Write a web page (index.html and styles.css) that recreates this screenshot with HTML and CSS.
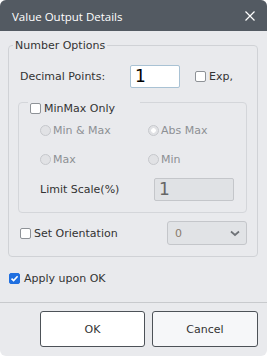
FILE: index.html
```html
<!DOCTYPE html>
<html>
<head>
<meta charset="utf-8">
<link rel="stylesheet" href="styles.css">
</head>
<body>
<div class="dialog">
  <div class="titlebar">
    <span class="title">Value Output Details</span>
    <svg class="close" width="10" height="10" viewBox="0 0 10 10"><path d="M0.5 0.5L9.5 9.5M9.5 0.5L0.5 9.5" stroke="#fff" stroke-width="1.2" fill="none"/></svg>
  </div>
  <div class="content">
    <fieldset class="outer">
      <legend>Number Options</legend>
      <div class="outer-body">
        <div class="decimal">
          <span class="lbl-dec">Decimal Points:</span>
          <span class="num">1</span>
          <span class="cb exp-cb"></span><span class="cb-text">Exp,</span>
        </div>
        <div class="group">
          <div class="group-head"><span class="cb"></span><span class="head-text">MinMax Only</span></div>
          <div class="radios">
            <div class="radio-item"><span class="rb"></span>Min &amp; Max</div>
            <div class="radio-item"><span class="rb on"></span>Abs Max</div>
            <div class="radio-item"><span class="rb"></span>Max</div>
            <div class="radio-item"><span class="rb"></span>Min</div>
          </div>
          <div class="limit"><span class="limit-lbl">Limit Scale(%)</span><span class="num dis">1</span></div>
        </div>
        <div class="orient">
          <span class="cb"></span><span class="cb-text">Set Orientation</span>
          <div class="select"><span class="sel-val">0</span><svg width="10" height="7" viewBox="0 0 10 7"><path d="M1 1.5L5 5L9 1.5" stroke="#6f7378" stroke-width="1.7" fill="none"/></svg></div>
        </div>
      </div>
    </fieldset>
    <div class="apply">
      <span class="cb checked"><svg width="9" height="9" viewBox="0 0 9 9"><path d="M1.5 4.6L3.6 6.6L7.6 2.2" stroke="#fff" stroke-width="1.6" fill="none"/></svg></span><span class="cb-text">Apply upon OK</span>
    </div>
  </div>
  <div class="footer">
    <button class="btn ok">OK</button>
    <button class="btn cancel">Cancel</button>
  </div>
</div>
</body>
</html>
```

FILE: styles.css
```css
* { box-sizing: border-box; }
html, body { margin: 0; background: #fff; }
body { font-family: "DejaVu Sans", sans-serif; font-size: 11px; color: #333; }

.dialog {
  width: 267px; height: 356px; border-radius: 6px; background: #e9eaed;
  overflow: hidden; display: flex; flex-direction: column;
}
.titlebar {
  height: 31px; flex: none; background: #535a62; display: flex; align-items: center;
  justify-content: space-between; padding: 0 12px;
}
.title { font-family: "Open Sans", sans-serif; font-size: 11.5px; color: #fff; margin-top: 1px; }
.close { display: block; }

.content { flex: 1; padding: 8px 9px 0 8px; }
.outer { margin: 0; padding: 0; border: 1px solid #d0d2d6; border-radius: 4px; min-width: 0; }
.outer legend { margin-left: 4px; padding: 0 2px; line-height: 13px; color: #333; }
.outer-body { padding: 13px 10px 11px 9px; }

.decimal { display: flex; align-items: center; height: 23px; padding-left: 2px; }
.lbl-dec { width: 110px; }
.num {
  display: block; width: 50px; height: 23px; border: 1px solid #a9c2d4; border-radius: 2px;
  background: #fff; font-size: 17px; line-height: 21px; padding-left: 4px; color: #000;
}
.exp-cb { margin-left: 15px; }
.cb {
  display: inline-flex; align-items: center; justify-content: center; flex: none;
  width: 11px; height: 11px; border: 1px solid #8e9297; border-radius: 2px; background: #fff;
}
.cb.checked { background: #1f6fe0; border-color: #1f6fe0; }
.cb-text { margin-left: 3px; }

.group { margin-top: 14px; border: 1px solid #d4d6da; border-radius: 4px; padding-bottom: 11px; }
.group-head {
  display: flex; align-items: flex-start; width: 112px; height: 14px;
  margin: -1px 0 0 9px; padding-left: 2px; background: #e9eaed;
}
.group-head .cb { margin-top: 1px; }
.head-text { margin-left: 3px; line-height: 13px; }

.radios { display: grid; grid-template-columns: 108px 1fr; row-gap: 9px; margin-top: 4px; padding-left: 21px; }
.radio-item { display: flex; align-items: center; height: 20px; color: #8d9094; }
.rb {
  width: 11px; height: 11px; border-radius: 50%; border: 1px solid #c6c8cc; background: #e1e2e5;
  margin-right: 2px; flex: none;
}
.rb.on { background: radial-gradient(circle, #fff 0 2px, #e1e2e5 2.6px); }

.limit { display: flex; align-items: center; margin-top: 9px; padding-left: 21px; height: 23px; }
.limit-lbl { width: 114px; }
.num.dis { width: 80px; background: #e0e2e5; border-color: #c4c6ca; color: #666; }

.orient { display: flex; align-items: center; height: 24px; margin-top: 8px; padding-left: 2px; }
.select {
  margin-left: auto; width: 80px; height: 24px; border: 1px solid #c4c6ca; border-radius: 3px;
  background: #e1e3e6; display: flex; align-items: center; justify-content: space-between;
  padding: 0 6px 0 7px;
}
.sel-val { color: #8a7c6c; }

.apply { display: flex; align-items: center; height: 13px; margin-top: 15px; padding-left: 1px; }
.apply .cb-text { margin-left: 4px; }

.footer {
  flex: none; height: 54px; border-top: 1px solid #c8cacd; display: flex;
  justify-content: flex-end; gap: 7px; padding: 8px 9px 9px 0;
}
.btn {
  height: 36px; border: 1px solid #4d5258; border-radius: 3px; background: #fff;
  font-family: "DejaVu Sans", sans-serif; font-size: 11px; color: #333; padding: 0;
}
.btn.ok { width: 105px; }
.btn.cancel { width: 106px; background: #f6f7f9; }
```
